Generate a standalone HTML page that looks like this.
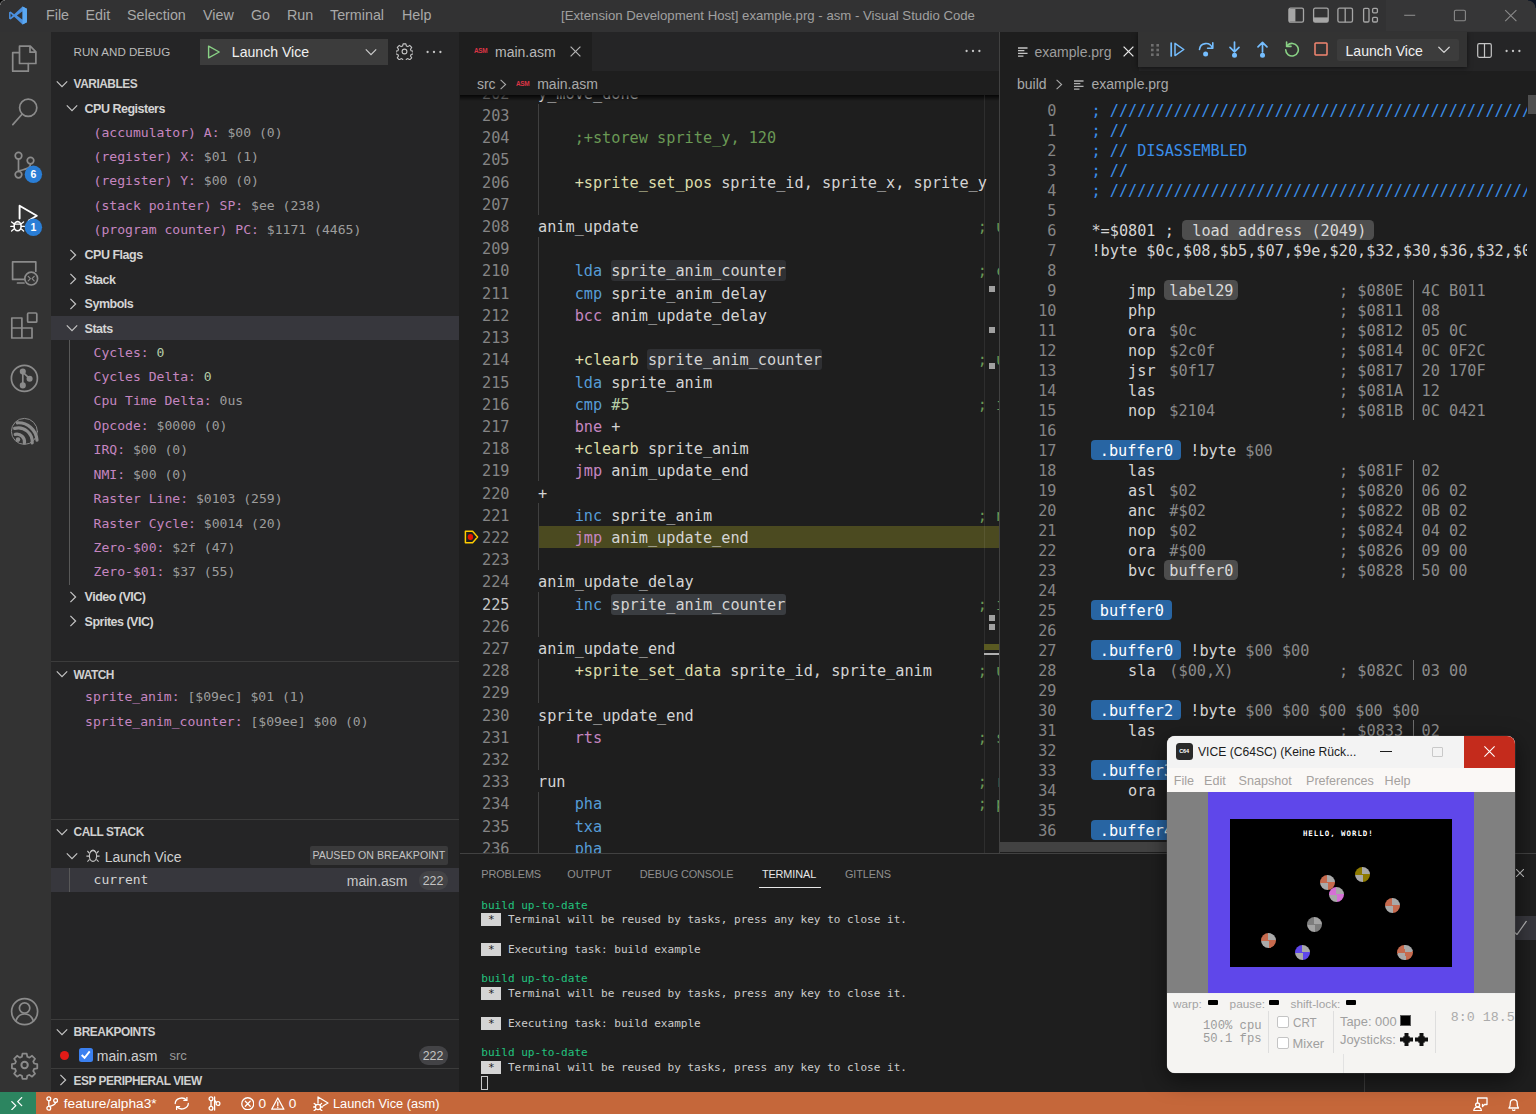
<!DOCTYPE html>
<html lang="en">
<head>
<meta charset="utf-8">
<title>[Extension Development Host] example.prg - asm - Visual Studio Code</title>
<style>
*{box-sizing:border-box;margin:0;padding:0}
html,body{width:1536px;height:1114px;overflow:hidden;background:#1e1e1e}
body{position:relative;font-family:"Liberation Sans","DejaVu Sans",sans-serif;font-size:14px;color:#cccccc;-webkit-font-smoothing:antialiased}
.abs{position:absolute}
.mono{font-family:"DejaVu Sans Mono","Liberation Mono",monospace}
svg{display:block}
/* ---------- title bar ---------- */
#titlebar{left:0;top:0;width:1536px;height:32px;background:#323233}
#titlebar .menu{position:absolute;top:0;height:32px;line-height:31px;font-size:14.3px;color:#a9a9a9;white-space:pre}
#titlebar .title{position:absolute;top:0;left:560px;width:416px;text-align:center;height:32px;line-height:31px;font-size:13.2px;color:#a0a0a0;white-space:pre}
/* ---------- activity bar ---------- */
#activity{left:0;top:32px;width:51px;height:1060px;background:#333333}
/* ---------- side bar ---------- */
#sidebar{left:51px;top:32px;width:408px;height:1060px;background:#252526;overflow:hidden}
/* sidebar items */
#sidebar>div{position:absolute;white-space:pre}
.sb-title{font-size:11.6px;color:#bbbbbb}
.sb-launch{font-size:14.1px;color:#f0f0f0}
.sb-hdr{padding-top:.6px;font-size:11.9px;font-weight:700;color:#d0d0d0;letter-spacing:-0.47px}
.sb-fold{font-size:12.5px;font-weight:700;color:#d4d4d4;letter-spacing:-0.5px}
.sb-var{font-size:13.08px;color:#9a9a9a}
.sb-var .vk{color:#c586c0}
.sb-var .vv{color:#9d9d9d}
.sb-var .vn{color:#b5cea8}
.sb-item{font-size:14px;color:#d0d0d0;padding-top:1.1px}
.sb-cur{font-size:13px;color:#d4d4d4}
.sb-paused{background:#3a3a3b;color:#c4c4c4;font-size:10.6px;text-align:center;border-radius:2px}
.sb-badge{background:#434346;color:#c4c4c4;padding-top:.6px;font-size:12.4px;text-align:center;border-radius:9px}
/* ---------- editors ---------- */
#ed1{left:460px;top:32px;width:540px;height:821px;background:#1e1e1e;overflow:hidden}
#ed2{left:1000px;top:32px;width:536px;height:821px;background:#1e1e1e;overflow:hidden}
#edsep{left:999px;top:32px;width:1px;height:821px;background:#414141}
.tabs{left:0;top:0;width:100%;height:38.5px;background:#252526}
.crumbs{left:0;top:38.5px;width:100%;height:24px;background:#1e1e1e}
/* editor common */
.asmico{font-size:8px;font-weight:700;color:#dc3545;letter-spacing:-0.4px;transform:scaleX(.8);transform-origin:0 50%;font-family:"Liberation Sans",sans-serif}
.tablabel{padding-top:.7px;font-size:14px;white-space:pre}
.crumb{padding-top:.7px;font-size:14px;color:#a9a9a9;white-space:pre}
.code{font-size:15.22px;color:#d4d4d4}
.code>div{position:absolute;white-space:pre}
#code1 .ln{margin-top:1.3px;left:0;width:49.5px;text-align:right;color:#858585;height:22.21px;line-height:22.21px}
#code1 .ln.cur{color:#c6c6c6}
#code1 .cl{height:22.21px;line-height:22.21px;margin-top:1.3px}
#code1 .guide{left:77.5px;width:1px;height:22.21px;background:#404040}
.k{color:#569cd6}.j{color:#c586c0}.m{color:#dcdcaa}.n{color:#b5cea8}.c{color:#6a9955}.w{color:#d4d4d4}
.hlb{background:#2f3033;border-radius:3px}
.hlb2{background:#3a3d41;border-radius:3px}
#code2 .ln{left:0;width:56.5px;text-align:right;color:#858585;height:20px;line-height:20px;margin-top:1px}
#code2 .cl{height:20px;line-height:20px;margin-top:1px}
#code2 .vbar{width:1px;height:20px;background:#6e6e6e}
.b{color:#3b8eea}.g{color:#8c8c8c}.o{color:#8a8a8a}.lt{color:#ffffff}.ih{color:#d8d8d8}
.ihint{background:#4d4d4d;border-radius:4.5px}
.lbl{background:#2865a3;border-radius:4px}
/* ---------- panel ---------- */
#panel{left:460px;top:853px;width:1076px;height:239px;background:#1e1e1e;border-top:1px solid #414141;overflow:hidden}
.ptab{height:20px;line-height:20px;font-size:10.9px;color:#8f8f8f;white-space:pre;text-align:left;letter-spacing:-0.1px}
.ptab.act{color:#e7e7e7}
.tl{margin-top:1.3px;font-size:11.05px;height:14.79px;line-height:14.79px;color:#cccccc;white-space:pre}
.st{top:0;height:22.5px;line-height:24.2px;font-size:13.7px;color:#fff;white-space:pre}
/* ---------- status bar ---------- */
#status{left:0;top:1091.5px;width:1536px;height:22.5px;background:#c5673a;color:#fff;font-size:13.6px;line-height:22px;white-space:pre}
#status .remote{left:0;top:0;width:36px;height:22.5px;background:#2c8560}
/* ---------- VICE ---------- */
#vice{left:1167px;top:736px;width:348px;height:337px;background:#f0f0f0;border-radius:8px;overflow:hidden;box-shadow:0 0 0 .5px #55555588,0 6px 22px rgba(0,0,0,.55)}
</style>
</head>
<body>
<div id="titlebar" class="abs"><svg class="abs" style="left:8px;top:6px" width="20" height="19" viewBox="0 0 100 100"><path d="M74 3 30 44 11 29 3 33v34l8 4 19-15 44 41 23-11V14zM74 28v44L44 50zM11 60V40l11 10z" fill="#4a8fde"/><path d="M74 3 97 14v72L74 97z" fill="#5aa8f2"/></svg>
<span class="menu" style="left:46px">File</span>
<span class="menu" style="left:85.5px">Edit</span>
<span class="menu" style="left:127px">Selection</span>
<span class="menu" style="left:203px">View</span>
<span class="menu" style="left:251px">Go</span>
<span class="menu" style="left:287px">Run</span>
<span class="menu" style="left:330px">Terminal</span>
<span class="menu" style="left:402px">Help</span>
<span class="title" id="wtitle">[Extension Development Host] example.prg - asm - Visual Studio Code</span>
<div class="abs" style="left:1386px;top:0;width:150px;height:31px;background:#363637"></div>
<svg class="abs" style="left:1288px;top:7px" width="92" height="17" viewBox="0 0 92 17" fill="none" stroke="#a6a6a6" stroke-width="1.3">
 <rect x="0.9" y="1.2" width="14.6" height="14" rx="1.6"/><path d="M1 2h6.4v12.6H1z" fill="#a6a6a6" stroke="none"/>
 <rect x="25.6" y="1.2" width="14.6" height="14" rx="1.6"/><path d="M26 10.4h14v4.6H26z" fill="#a6a6a6" stroke="none"/>
 <rect x="49.9" y="1.2" width="14.6" height="14" rx="1.6"/><path d="M57.2 1.2v14"/>
 <rect x="75.6" y="1.4" width="5.4" height="13.6" rx="1.2"/><rect x="84.6" y="1.4" width="4.8" height="4.4" rx="1.1"/><rect x="84.6" y="10.4" width="4.8" height="4.6" rx="1.1"/>
</svg>
<svg class="abs" style="left:1400px;top:5px" width="124" height="22" viewBox="0 0 124 22" fill="none" stroke="#8a8a8a" stroke-width="1.1">
 <path d="M4.2 10.3h11"/>
 <rect x="54.4" y="5.2" width="11" height="10.6" rx="1.4"/>
 <path d="M105.2 5.2l11.2 11M116.4 5.2l-11.2 11"/>
</svg>
<div class="abs" id="corner-tr" style="left:1528px;top:0;width:8px;height:8px;background:radial-gradient(circle at 0 100%,rgba(0,0,0,0) 7px,#0c1424 7.8px)"></div>
<div class="abs" id="corner-tl" style="left:0;top:0;width:5px;height:5px;background:radial-gradient(circle at 100% 100%,rgba(0,0,0,0) 4px,#777 4.6px,#050505 5.4px)"></div>
</div>
<div id="activity" class="abs"><svg class="abs" style="left:0;top:0" width="51" height="1060" viewBox="0 32 51 1060" fill="none" stroke="#8b8b8b" stroke-width="1.7" stroke-linejoin="round" stroke-linecap="round">
 <!-- explorer -->
 <path d="M19.5 63.5v-17.3h10.8l5.6 5.6v11.7z M30 46.4v5.8h5.8"/>
 <path d="M19.3 52.6h-6.6v18.6h15.6v-7.5"/>
 <!-- search -->
 <circle cx="28.2" cy="107.8" r="8.6"/><path d="M22 114.2 12.8 124.6"/>
 <!-- scm -->
 <circle cx="18.5" cy="155.7" r="3.3"/><circle cx="30.5" cy="160.6" r="3.3"/><circle cx="18.5" cy="174.6" r="3.3"/>
 <path d="M18.5 159v12.3M30.5 164c0 5-6 5.2-11.6 7"/>
 <!-- remote explorer -->
 <path d="M24.5 279.4H12.6v-17.6h23.2v9.4M17.5 283h6.5"/>
 <circle cx="31.2" cy="278.6" r="6.4" fill="#333"/>
 <path d="M28.2 276.4l2.2 2.2-2.2 2.2M34.2 276.4l-2.2 2.2 2.2 2.2" stroke-width="1.2"/>
 <!-- extensions -->
 <path d="M11.8 318h10.1v10H11.8zM21.9 328H32v10H21.9zM11.8 328h10.1v10H11.8z"/><rect x="27.6" y="313" width="9.2" height="9.2" rx="1"/>
 <!-- gitlens -->
 <circle cx="24.4" cy="378.4" r="13"/>
 <circle cx="22.8" cy="371.6" r="2.2" fill="#8b8b8b"/><circle cx="29.6" cy="378.8" r="2.2" fill="#8b8b8b"/><circle cx="22.8" cy="385.4" r="2.2" fill="#8b8b8b"/>
 <path d="M22.8 372v13M23 372.4l6.4 6"/>
 <!-- espressif -->
 <circle cx="24.4" cy="431.4" r="13" stroke-width="1"/>
 <g stroke-width="3.2"><path d="M14.6 428.4a14 14 0 0 1 17.6 14.6"/><path d="M17.4 422.8a18.6 18.6 0 0 1 19.6 17.4"/><path d="M15.2 434.4a7.6 7.6 0 0 1 9.2 8.6"/></g>
 <circle cx="18" cy="439.6" r="2.3" fill="#8b8b8b" stroke="none"/>
 <!-- account -->
 <circle cx="24.6" cy="1011.6" r="13"/><circle cx="24.6" cy="1008" r="5.2"/><path d="M15.8 1021c1.6-5 5-7 8.8-7s7.2 2 8.8 7"/>
 <!-- gear -->
 <g transform="translate(24.6 1065)"><circle r="3.2" stroke-width="2"/>
 <path stroke-width="2" d="M-2.4-13h4.8l.7 3.6 2.4 1 3-2.1 3.4 3.4-2.1 3 1 2.4 3.6.7v4.8l-3.6.7-1 2.4 2.1 3-3.4 3.4-3-2.1-2.4 1-.7 3.6h-4.8l-.7-3.6-2.4-1-3 2.1-3.4-3.4 2.1-3-1-2.4-3.6-.7v-4.8l3.6-.7 1-2.4-2.1-3 3.400-3.400 3 2.100 2.400-1z" transform="scale(.88)"/></g>
 <!-- debug (active) -->
 <g stroke="#ffffff"><path d="M19.6 218.600v-12.800l17.200 10-8 4.700" stroke-width="1.900"/>
 <ellipse cx="17.600" cy="226.200" rx="3.500" ry="4.600" stroke-width="1.600"/>
 <path d="M14.400 224.200h6.400M13.900 223.700l-2.300-1.700M21.300 223.700l2.300-1.700M13.700 226.400h-2.900M21.500 226.400h2.900M13.900 229.100l-2.300 1.900M21.300 229.100l2.300 1.900" stroke-width="1.300"/></g>
 <!-- badges -->
 <circle cx="33.400" cy="174.300" r="8.700" fill="#2a7ed6" stroke="none"/>
 <circle cx="33.400" cy="227.300" r="8.700" fill="#2a7ed6" stroke="none"/>
 <text x="33.400" y="178.200" font-family="Liberation Sans, sans-serif" font-size="10.500" font-weight="700" fill="#fff" stroke="none" text-anchor="middle">6</text>
 <text x="33.400" y="231.200" font-family="Liberation Sans, sans-serif" font-size="10.500" font-weight="700" fill="#fff" stroke="none" text-anchor="middle">1</text>
</svg>
</div>
<div id="sidebar" class="abs"><div class="sb-title" style="left:22.6px;top:7.50px;height:24px;line-height:24px;">RUN AND DEBUG</div>
<div class="abs" style="left:149px;top:6.5px;width:188px;height:26px;background:#3c3c3c"></div>
<svg class="abs" style="left:155.500px;top:13px" width="14" height="14" viewBox="0 0 14 14" fill="none" stroke="#89d185" stroke-width="1.4" stroke-linejoin="round"><path d="M1.6 1.2v11.6l10.6-5.8z"/></svg>
<div class="sb-launch" style="left:180.8px;top:7.60px;height:24px;line-height:24px;">Launch Vice</div>
<svg class="abs" style="left:314.2px;top:13.5px" width="12" height="12" viewBox="0 0 12 12" fill="none" stroke="#cccccc" stroke-width="1.2"><path d="M0.8 3.4 6 8.6l5.2-5.2"/></svg>
<svg class="abs" style="left:344.500px;top:10.500px" width="17" height="17" viewBox="-8.5 -8.5 17 17" fill="none" stroke="#c5c5c5" stroke-width="1.1" stroke-linejoin="round"><circle r="2.4"/><path d="M-1.4-7.600h2.800l.5 2.100 1.500.6 1.800-1.200 2 2-1.200 1.800.6 1.500 2.100.5v2.800l-2.100.5-.6 1.500 1.200 1.800-2 2-1.800-1.200-1.500.6-.5 2.100h-2.800l-.5-2.100-1.500-.6-1.800 1.200-2-2 1.200-1.800-.6-1.500-2.100-.5v-2.800l2.100-.5.6-1.500-1.200-1.800 2-2 1.800 1.200 1.500-.6z" transform="translate(0 6.2) translate(0 -6.200)"/></svg>
<svg class="abs" style="left:375px;top:17.500px" width="16" height="4" viewBox="0 0 16 4" fill="#c5c5c5"><circle cx="1.6" cy="2" r="1.15"/><circle cx="8" cy="2" r="1.15"/><circle cx="14.400" cy="2" r="1.15"/></svg>
<svg class="abs" style="left:5.4px;top:45.5px" width="12" height="12" viewBox="0 0 12 12" fill="none" stroke="#c5c5c5" stroke-width="1.2"><path d="M0.8 3.4 6 8.6l5.2-5.2"/></svg>
<div class="sb-hdr" style="left:22.6px;top:39.40px;height:24px;line-height:24px;">VARIABLES</div>
<div class="abs" style="left:0;top:283.84px;width:408px;height:24.44px;background:#37373d"></div>
<div class="abs" style="left:18.4px;top:308.28px;width:1px;height:244.40px;background:#585858"></div>
<svg class="abs" style="left:15.2px;top:70.1px" width="12" height="12" viewBox="0 0 12 12" fill="none" stroke="#c5c5c5" stroke-width="1.2"><path d="M0.8 3.4 6 8.6l5.2-5.2"/></svg><div class="sb-fold" style="left:33.6px;top:64.60px;height:24px;line-height:24px;">CPU Registers</div>
<div class="sb-var mono" style="left:42.6px;top:88.54px;height:24px;line-height:24px;"><span class="vk">(accumulator) A:</span> <span class="vv">$00 (0)</span></div>
<div class="sb-var mono" style="left:42.6px;top:112.98px;height:24px;line-height:24px;"><span class="vk">(register) X:</span> <span class="vv">$01 (1)</span></div>
<div class="sb-var mono" style="left:42.6px;top:137.42px;height:24px;line-height:24px;"><span class="vk">(register) Y:</span> <span class="vv">$00 (0)</span></div>
<div class="sb-var mono" style="left:42.6px;top:161.86px;height:24px;line-height:24px;"><span class="vk">(stack pointer) SP:</span> <span class="vv">$ee (238)</span></div>
<div class="sb-var mono" style="left:42.6px;top:186.30px;height:24px;line-height:24px;"><span class="vk">(program counter) PC:</span> <span class="vv">$1171 (4465)</span></div>
<svg class="abs" style="left:16.2px;top:216.7px" width="12" height="12" viewBox="0 0 12 12" fill="none" stroke="#c5c5c5" stroke-width="1.2"><path d="M3.4 0.8 8.6 6l-5.2 5.2"/></svg><div class="sb-fold" style="left:33.6px;top:211.24px;height:24px;line-height:24px;">CPU Flags</div>
<svg class="abs" style="left:16.2px;top:241.2px" width="12" height="12" viewBox="0 0 12 12" fill="none" stroke="#c5c5c5" stroke-width="1.2"><path d="M3.4 0.8 8.6 6l-5.2 5.2"/></svg><div class="sb-fold" style="left:33.6px;top:235.68px;height:24px;line-height:24px;">Stack</div>
<svg class="abs" style="left:16.2px;top:265.6px" width="12" height="12" viewBox="0 0 12 12" fill="none" stroke="#c5c5c5" stroke-width="1.2"><path d="M3.4 0.8 8.6 6l-5.2 5.2"/></svg><div class="sb-fold" style="left:33.6px;top:260.12px;height:24px;line-height:24px;">Symbols</div>
<svg class="abs" style="left:15.2px;top:290.1px" width="12" height="12" viewBox="0 0 12 12" fill="none" stroke="#c5c5c5" stroke-width="1.2"><path d="M0.8 3.4 6 8.6l5.2-5.2"/></svg><div class="sb-fold" style="left:33.6px;top:284.56px;height:24px;line-height:24px;">Stats</div>
<div class="sb-var mono" style="left:42.6px;top:308.50px;height:24px;line-height:24px;"><span class="vk">Cycles:</span> <span class="vn">0</span></div>
<div class="sb-var mono" style="left:42.6px;top:332.94px;height:24px;line-height:24px;"><span class="vk">Cycles Delta:</span> <span class="vn">0</span></div>
<div class="sb-var mono" style="left:42.6px;top:357.38px;height:24px;line-height:24px;"><span class="vk">Cpu Time Delta:</span> <span class="vv">0us</span></div>
<div class="sb-var mono" style="left:42.6px;top:381.82px;height:24px;line-height:24px;"><span class="vk">Opcode:</span> <span class="vv">$0000 (0)</span></div>
<div class="sb-var mono" style="left:42.6px;top:406.26px;height:24px;line-height:24px;"><span class="vk">IRQ:</span> <span class="vv">$00 (0)</span></div>
<div class="sb-var mono" style="left:42.6px;top:430.70px;height:24px;line-height:24px;"><span class="vk">NMI:</span> <span class="vv">$00 (0)</span></div>
<div class="sb-var mono" style="left:42.6px;top:455.14px;height:24px;line-height:24px;"><span class="vk">Raster Line:</span> <span class="vv">$0103 (259)</span></div>
<div class="sb-var mono" style="left:42.6px;top:479.58px;height:24px;line-height:24px;"><span class="vk">Raster Cycle:</span> <span class="vv">$0014 (20)</span></div>
<div class="sb-var mono" style="left:42.6px;top:504.02px;height:24px;line-height:24px;"><span class="vk">Zero-$00:</span> <span class="vv">$2f (47)</span></div>
<div class="sb-var mono" style="left:42.6px;top:528.46px;height:24px;line-height:24px;"><span class="vk">Zero-$01:</span> <span class="vv">$37 (55)</span></div>
<svg class="abs" style="left:16.2px;top:558.9px" width="12" height="12" viewBox="0 0 12 12" fill="none" stroke="#c5c5c5" stroke-width="1.2"><path d="M3.4 0.8 8.6 6l-5.2 5.2"/></svg><div class="sb-fold" style="left:33.6px;top:553.40px;height:24px;line-height:24px;">Video (VIC)</div>
<svg class="abs" style="left:16.2px;top:583.3px" width="12" height="12" viewBox="0 0 12 12" fill="none" stroke="#c5c5c5" stroke-width="1.2"><path d="M3.4 0.8 8.6 6l-5.2 5.2"/></svg><div class="sb-fold" style="left:33.6px;top:577.84px;height:24px;line-height:24px;">Sprites (VIC)</div>
<div class="abs" style="left:0;top:629.0px;width:408px;height:1px;background:#3c3c3c"></div>
<svg class="abs" style="left:5.4px;top:636.0px" width="12" height="12" viewBox="0 0 12 12" fill="none" stroke="#c5c5c5" stroke-width="1.2"><path d="M0.8 3.4 6 8.6l5.2-5.2"/></svg>
<div class="sb-hdr" style="left:22.6px;top:630.00px;height:24px;line-height:24px;">WATCH</div>
<div class="sb-var mono" style="left:34.1px;top:653.40px;height:24px;line-height:24px;"><span class="vk">sprite_anim:</span> <span class="vv">[$09ec] $01 (1)</span></div>
<div class="sb-var mono" style="left:34.1px;top:677.80px;height:24px;line-height:24px;"><span class="vk">sprite_anim_counter:</span> <span class="vv">[$09ee] $00 (0)</span></div>
<div class="abs" style="left:0;top:786.7px;width:408px;height:1px;background:#3c3c3c"></div>
<svg class="abs" style="left:5.4px;top:793.5px" width="12" height="12" viewBox="0 0 12 12" fill="none" stroke="#c5c5c5" stroke-width="1.2"><path d="M0.8 3.4 6 8.6l5.2-5.2"/></svg>
<div class="sb-hdr" style="left:22.6px;top:787.50px;height:24px;line-height:24px;">CALL STACK</div>
<svg class="abs" style="left:15.2px;top:817.7px" width="12" height="12" viewBox="0 0 12 12" fill="none" stroke="#c5c5c5" stroke-width="1.2"><path d="M0.8 3.4 6 8.6l5.2-5.2"/></svg>
<svg class="abs" style="left:34px;top:814.5px" width="16" height="18" viewBox="0 1 16 16" preserveAspectRatio="none" fill="none" stroke="#c5c5c5" stroke-width="1.1"><ellipse cx="8" cy="9" rx="3.600" ry="4.800"/><path d="M5.400 5.800a2.700 2.700 0 0 1 5.200 0M4.400 6.600 2.400 4.600M11.600 6.600l2-2M4.400 9.200H1.400M11.600 9.200h3M4.600 12l-2.200 2M11.400 12l2.200 2"/></svg>
<div class="sb-item" style="left:53.7px;top:811.60px;height:24px;line-height:24px;">Launch Vice</div>
<div class="abs sb-paused" style="left:258.8px;top:814px;width:138px;height:18.700px;line-height:18.700px">PAUSED ON BREAKPOINT</div>
<div class="abs" style="left:0;top:835.7px;width:408px;height:24.400px;background:#37373d"></div>
<div class="abs" style="left:18.4px;top:835.7px;width:1px;height:24.400px;background:#585858"></div>
<div class="sb-cur mono" style="left:42.6px;top:835.70px;height:24px;line-height:24px;">current</div>
<div class="sb-item" style="left:295.8px;top:835.80px;height:24px;line-height:24px;color:#c8c8c8">main.asm</div>
<div class="abs sb-badge" style="left:367.5px;top:839.3px;width:29px;height:19px;line-height:19px">222</div>
<div class="abs" style="left:0;top:987.0px;width:408px;height:1px;background:#3c3c3c"></div>
<svg class="abs" style="left:5.4px;top:993.7px" width="12" height="12" viewBox="0 0 12 12" fill="none" stroke="#c5c5c5" stroke-width="1.2"><path d="M0.8 3.4 6 8.6l5.2-5.2"/></svg>
<div class="sb-hdr" style="left:22.6px;top:987.70px;height:24px;line-height:24px;">BREAKPOINTS</div>
<div class="abs" style="left:8.6px;top:1018.5px;width:9.400px;height:9.400px;border-radius:50%;background:#e11b17"></div>
<div class="abs" style="left:28.4px;top:1016.2px;width:13.400px;height:13.400px;border-radius:2.500px;background:#3b80f0"><svg width="13.400" height="13.400" viewBox="0 0 14 14" fill="none" stroke="#fff" stroke-width="2"><path d="M2.800 7.300 5.800 10.200 11.200 3.600"/></svg></div>
<div class="sb-item" style="left:45.8px;top:1011.20px;height:24px;line-height:24px;">main.asm</div>
<div class="sb-item" style="left:118.4px;top:1011.40px;height:24px;line-height:24px;color:#9a9a9a;font-size:13px">src</div>
<div class="abs sb-badge" style="left:367.5px;top:1014px;width:29px;height:19px;line-height:19px">222</div>
<div class="abs" style="left:0;top:1036.0px;width:408px;height:1px;background:#3c3c3c"></div>
<svg class="abs" style="left:5.6px;top:1042.0px" width="12" height="12" viewBox="0 0 12 12" fill="none" stroke="#c5c5c5" stroke-width="1.2"><path d="M3.4 0.8 8.6 6l-5.2 5.2"/></svg>
<div class="sb-hdr" style="left:22.6px;top:1036.00px;height:24px;line-height:24px;">ESP PERIPHERAL VIEW</div></div>
<div id="ed1" class="abs"><div class="tabs abs"></div>
<div class="abs" style="left:0;top:0;width:132px;height:38.500px;background:#1e1e1e"></div>
<div class="abs asmico" style="left:13.6px;top:0;height:38px;line-height:38px">ASM</div>
<div class="abs tablabel" style="left:35px;top:0;height:38px;line-height:38.500px;color:#b8b8b8">main.asm</div>
<svg class="abs" style="left:110px;top:14px" width="11" height="11" viewBox="0 0 11 11" stroke="#b4b4b4" stroke-width="1.2"><path d="M.6.6l9.800 9.800M10.400.6.6 10.400"/></svg>
<svg class="abs" style="left:505px;top:17px" width="16" height="4" viewBox="0 0 16 4" fill="#c5c5c5"><circle cx="1.6" cy="2" r="1.15"/><circle cx="8" cy="2" r="1.15"/><circle cx="14.400" cy="2" r="1.15"/></svg>
<div class="crumbs abs"></div>
<div class="abs crumb" style="left:16.900px;top:38px;height:23px;line-height:27px">src</div>
<svg class="abs" style="left:39px;top:47px" width="9" height="11" viewBox="0 0 9 11" fill="none" stroke="#a9a9a9" stroke-width="1.1"><path d="M1.600.8 6.600 5.500l-5 4.700"/></svg>
<div class="abs asmico" style="left:56px;top:38px;height:23px;line-height:27px;">ASM</div>
<div class="abs crumb" style="left:77.200px;top:38px;height:23px;line-height:27px">main.asm</div>
<div class="abs code mono" id="code1" style="left:0;top:62.500px;width:540px;height:758.500px;overflow:hidden">
<div class="abs" style="left:77.500px;top:431.18px;width:462.500px;height:22.21px;background:#4b4a20"></div>
<div class="ln" style="top:-13.02px">202</div>
<div class="cl w" style="left:78.00px;top:-13.02px">y_move_done</div>
<div class="ln" style="top:9.19px">203</div>
<div class="guide" style="top:9.19px"></div>
<div class="ln" style="top:31.40px">204</div>
<div class="guide" style="top:31.40px"></div>
<div class="cl c" style="left:114.64px;top:31.40px">;+storew sprite_y, 120</div>
<div class="ln" style="top:53.62px">205</div>
<div class="guide" style="top:53.62px"></div>
<div class="ln" style="top:75.83px">206</div>
<div class="guide" style="top:75.83px"></div>
<div class="cl m" style="left:114.64px;top:75.83px">+sprite_set_pos</div>
<div class="cl w" style="left:252.04px;top:75.83px"> sprite_id, sprite_x, sprite_y</div>
<div class="ln" style="top:98.03px">207</div>
<div class="guide" style="top:98.03px"></div>
<div class="ln" style="top:120.25px">208</div>
<div class="cl w" style="left:78.00px;top:120.25px">anim_update</div>
<div class="cl c" style="left:517.68px;top:120.25px">; u</div>
<div class="ln" style="top:142.46px">209</div>
<div class="guide" style="top:142.46px"></div>
<div class="ln" style="top:164.66px">210</div>
<div class="guide" style="top:164.66px"></div>
<div class="cl k" style="left:114.64px;top:164.66px">lda</div>
<div class="hlb" style="left:150.78px;top:165.86px;width:175.04px;height:21.01px"></div>
<div class="cl w" style="left:151.28px;top:164.66px">sprite_anim_counter</div>
<div class="cl c" style="left:517.68px;top:164.66px">; c</div>
<div class="ln" style="top:186.88px">211</div>
<div class="guide" style="top:186.88px"></div>
<div class="cl k" style="left:114.64px;top:186.88px">cmp</div>
<div class="cl w" style="left:151.28px;top:186.88px">sprite_anim_delay</div>
<div class="ln" style="top:209.08px">212</div>
<div class="guide" style="top:209.08px"></div>
<div class="cl j" style="left:114.64px;top:209.08px">bcc</div>
<div class="cl w" style="left:151.28px;top:209.08px">anim_update_delay</div>
<div class="ln" style="top:231.30px">213</div>
<div class="guide" style="top:231.30px"></div>
<div class="ln" style="top:253.50px">214</div>
<div class="guide" style="top:253.50px"></div>
<div class="cl m" style="left:114.64px;top:253.50px">+clearb</div>
<div class="hlb" style="left:187.42px;top:254.70px;width:175.04px;height:21.01px"></div>
<div class="cl w" style="left:187.92px;top:253.50px">sprite_anim_counter</div>
<div class="cl c" style="left:517.68px;top:253.50px">; u</div>
<div class="ln" style="top:275.71px">215</div>
<div class="guide" style="top:275.71px"></div>
<div class="cl k" style="left:114.64px;top:275.71px">lda</div>
<div class="cl w" style="left:151.28px;top:275.71px">sprite_anim</div>
<div class="ln" style="top:297.93px">216</div>
<div class="guide" style="top:297.93px"></div>
<div class="cl k" style="left:114.64px;top:297.93px">cmp</div>
<div class="cl n" style="left:151.28px;top:297.93px">#5</div>
<div class="cl c" style="left:517.68px;top:297.93px">; i</div>
<div class="ln" style="top:320.13px">217</div>
<div class="guide" style="top:320.13px"></div>
<div class="cl j" style="left:114.64px;top:320.13px">bne</div>
<div class="cl w" style="left:151.28px;top:320.13px">+</div>
<div class="ln" style="top:342.35px">218</div>
<div class="guide" style="top:342.35px"></div>
<div class="cl m" style="left:114.64px;top:342.35px">+clearb</div>
<div class="cl w" style="left:187.92px;top:342.35px">sprite_anim</div>
<div class="ln" style="top:364.56px">219</div>
<div class="guide" style="top:364.56px"></div>
<div class="cl j" style="left:114.64px;top:364.56px">jmp</div>
<div class="cl w" style="left:151.28px;top:364.56px">anim_update_end</div>
<div class="ln" style="top:386.76px">220</div>
<div class="cl w" style="left:78.00px;top:386.76px">+</div>
<div class="ln" style="top:408.98px">221</div>
<div class="guide" style="top:408.98px"></div>
<div class="cl k" style="left:114.64px;top:408.98px">inc</div>
<div class="cl w" style="left:151.28px;top:408.98px">sprite_anim</div>
<div class="cl c" style="left:517.68px;top:408.98px">; n</div>
<div class="ln" style="top:431.18px">222</div>
<div class="guide" style="top:431.18px"></div>
<div class="cl j" style="left:114.64px;top:431.18px">jmp</div>
<div class="cl w" style="left:151.28px;top:431.18px">anim_update_end</div>
<div class="ln" style="top:453.39px">223</div>
<div class="guide" style="top:453.39px"></div>
<div class="ln" style="top:475.61px">224</div>
<div class="cl w" style="left:78.00px;top:475.61px">anim_update_delay</div>
<div class="ln cur" style="top:497.81px">225</div>
<div class="guide" style="top:497.81px"></div>
<div class="cl k" style="left:114.64px;top:497.81px">inc</div>
<div class="hlb2" style="left:150.78px;top:499.01px;width:175.04px;height:21.01px"></div>
<div class="cl w" style="left:151.28px;top:497.81px">sprite_anim_counter</div>
<div class="cl c" style="left:517.68px;top:497.81px">; i</div>
<div class="ln" style="top:520.02px">226</div>
<div class="guide" style="top:520.02px"></div>
<div class="ln" style="top:542.23px">227</div>
<div class="cl w" style="left:78.00px;top:542.23px">anim_update_end</div>
<div class="ln" style="top:564.44px">228</div>
<div class="guide" style="top:564.44px"></div>
<div class="cl m" style="left:114.64px;top:564.44px">+sprite_set_data</div>
<div class="cl w" style="left:261.20px;top:564.44px"> sprite_id, sprite_anim</div>
<div class="cl c" style="left:517.68px;top:564.44px">; u</div>
<div class="ln" style="top:586.65px">229</div>
<div class="guide" style="top:586.65px"></div>
<div class="ln" style="top:608.87px">230</div>
<div class="cl w" style="left:78.00px;top:608.87px">sprite_update_end</div>
<div class="ln" style="top:631.07px">231</div>
<div class="guide" style="top:631.07px"></div>
<div class="cl j" style="left:114.64px;top:631.07px">rts</div>
<div class="cl c" style="left:517.68px;top:631.07px">; s</div>
<div class="ln" style="top:653.28px">232</div>
<div class="guide" style="top:653.28px"></div>
<div class="ln" style="top:675.50px">233</div>
<div class="cl w" style="left:78.00px;top:675.50px">run</div>
<div class="cl c" style="left:517.68px;top:675.50px">; r</div>
<div class="ln" style="top:697.70px">234</div>
<div class="guide" style="top:697.70px"></div>
<div class="cl k" style="left:114.64px;top:697.70px">pha</div>
<div class="cl c" style="left:517.68px;top:697.70px">; p</div>
<div class="ln" style="top:719.91px">235</div>
<div class="guide" style="top:719.91px"></div>
<div class="cl k" style="left:114.64px;top:719.91px">txa</div>
<div class="ln" style="top:742.12px">236</div>
<div class="guide" style="top:742.12px"></div>
<div class="cl k" style="left:114.64px;top:742.12px">pha</div>
<div class="ln" style="top:764.33px">237</div>
<div class="guide" style="top:764.33px"></div>
<div class="cl k" style="left:114.64px;top:764.33px">tya</div>
<svg class="abs" style="left:3.700px;top:435.49px" width="15" height="14" viewBox="0 0 15 13" preserveAspectRatio="none" fill="none"><path d="M1.400 1.200h7.200l5 5.300-5 5.300H1.400z" stroke="#ffcc00" stroke-width="1.500" stroke-linejoin="round"/><circle cx="6.400" cy="6.500" r="2.700" fill="#e51400"/></svg>
</div>
<div class="abs" style="left:0;top:62.500px;width:540px;height:6px;background:linear-gradient(#000000cc,#00000000)"></div>
<div class="abs" style="left:523.500px;top:62.500px;width:1px;height:758.500px;background:rgba(255,255,255,.075)"></div>
<div class="abs" style="left:528.600px;top:254.2px;width:6px;height:6px;background:#a0a0a0"></div>
<div class="abs" style="left:528.600px;top:294.5px;width:6px;height:6px;background:#a0a0a0"></div>
<div class="abs" style="left:528.600px;top:331.0px;width:6px;height:6px;background:#a0a0a0"></div>
<div class="abs" style="left:528.600px;top:582.6px;width:6px;height:6px;background:#a0a0a0"></div>
<div class="abs" style="left:528.600px;top:592.0px;width:6px;height:6px;background:#a0a0a0"></div>
<div class="abs" style="left:524px;top:612px;width:16px;height:5.600px;background:#5a5a22"></div>
<div class="abs" style="left:524px;top:620.7px;width:16px;height:2.300px;background:#b0b0b0"></div></div>
<div id="ed2" class="abs"><div class="tabs abs"></div>
<div class="abs" style="left:0;top:0;width:139px;height:38.500px;background:#1e1e1e"></div>
<svg class="abs" style="left:17.5px;top:14.5px" width="10" height="10" viewBox="0 0 11 10" preserveAspectRatio="none" stroke="#c5c5c5" stroke-width="1.3" fill="none"><path d="M0 1h10.500M0 3.700h7M0 6.400h10.500M0 9.100h6"/></svg>
<div class="abs tablabel" style="left:34.5px;top:0;height:38px;line-height:38.500px;color:#9d9d9d">example.prg</div>
<svg class="abs" style="left:123px;top:14px" width="11" height="11" viewBox="0 0 11 11" stroke="#e8e8e8" stroke-width="1.300"><path d="M.6.6l9.800 9.800M10.400.6.6 10.400"/></svg>
<svg class="abs" style="left:476.5px;top:11px" width="15" height="15" viewBox="0 0 15 15" fill="none" stroke="#c5c5c5" stroke-width="1.200"><rect x=".7" y=".7" width="13.600" height="13.600" rx="1.500"/><path d="M7.500.7v13.600"/></svg>
<svg class="abs" style="left:505px;top:17px" width="16" height="4" viewBox="0 0 16 4" fill="#c5c5c5"><circle cx="1.6" cy="2" r="1.15"/><circle cx="8" cy="2" r="1.15"/><circle cx="14.400" cy="2" r="1.15"/></svg>
<div class="crumbs abs"></div>
<div class="abs crumb" style="left:17px;top:38px;height:23px;line-height:27px">build</div>
<svg class="abs" style="left:54.5px;top:47px" width="9" height="11" viewBox="0 0 9 11" fill="none" stroke="#a9a9a9" stroke-width="1.100"><path d="M1.600.8 6.600 5.500l-5 4.700"/></svg>
<svg class="abs" style="left:74.0px;top:47.5px" width="10" height="10" viewBox="0 0 11 10" preserveAspectRatio="none" stroke="#b0b0b0" stroke-width="1.3" fill="none"><path d="M0 1h10.500M0 3.700h7M0 6.400h10.500M0 9.100h6"/></svg>
<div class="abs crumb" style="left:91.5px;top:38px;height:23px;line-height:27px">example.prg</div>
<div class="abs code mono" id="code2" style="left:0;top:62.500px;width:527px;height:747.500px;overflow:hidden">
<div class="ln" style="top:5.90px">0</div>
<div class="ln" style="top:25.90px">1</div>
<div class="ln" style="top:45.90px">2</div>
<div class="ln" style="top:65.90px">3</div>
<div class="ln" style="top:85.90px">4</div>
<div class="ln" style="top:105.90px">5</div>
<div class="ln" style="top:125.90px">6</div>
<div class="ln" style="top:145.90px">7</div>
<div class="ln" style="top:165.90px">8</div>
<div class="ln" style="top:185.90px">9</div>
<div class="ln" style="top:205.90px">10</div>
<div class="ln" style="top:225.90px">11</div>
<div class="ln" style="top:245.90px">12</div>
<div class="ln" style="top:265.90px">13</div>
<div class="ln" style="top:285.90px">14</div>
<div class="ln" style="top:305.90px">15</div>
<div class="ln" style="top:325.90px">16</div>
<div class="ln" style="top:345.90px">17</div>
<div class="ln" style="top:365.90px">18</div>
<div class="ln" style="top:385.90px">19</div>
<div class="ln" style="top:405.90px">20</div>
<div class="ln" style="top:425.90px">21</div>
<div class="ln" style="top:445.90px">22</div>
<div class="ln" style="top:465.90px">23</div>
<div class="ln" style="top:485.90px">24</div>
<div class="ln" style="top:505.90px">25</div>
<div class="ln" style="top:525.90px">26</div>
<div class="ln" style="top:545.90px">27</div>
<div class="ln" style="top:565.90px">28</div>
<div class="ln" style="top:585.90px">29</div>
<div class="ln" style="top:605.90px">30</div>
<div class="ln" style="top:625.90px">31</div>
<div class="ln" style="top:645.90px">32</div>
<div class="ln" style="top:665.90px">33</div>
<div class="ln" style="top:685.90px">34</div>
<div class="ln" style="top:705.90px">35</div>
<div class="ln" style="top:725.90px">36</div>
<div class="ln" style="top:745.90px">37</div>
<div class="cl b" style="left:91.40px;top:5.90px">; ////////////////////////////////////////////////////////////</div>
<div class="cl b" style="left:91.40px;top:25.90px">; //</div>
<div class="cl b" style="left:91.40px;top:45.90px">; // DISASSEMBLED</div>
<div class="cl b" style="left:91.40px;top:65.90px">; //</div>
<div class="cl b" style="left:91.40px;top:85.90px">; ////////////////////////////////////////////////////////////</div>
<div class="cl w" style="left:91.40px;top:125.90px">*=$0801 ; </div>
<div class="ihint" style="left:182.18px;top:125.70px;width:191.65px;height:19.6px"></div>
<div class="cl ih" style="left:192.27px;top:125.90px">load address (2049)</div>
<div class="cl w" style="left:91.40px;top:145.90px">!byte $0c,$08,$b5,$07,$9e,$20,$32,$30,$36,$32,$01,$00,$00</div>
<div class="cl w" style="left:128.08px;top:185.90px">jmp</div>
<div class="ihint" style="left:164.03px;top:185.70px;width:74.28px;height:19.6px"></div>
<div class="cl ih" style="left:169.35px;top:185.90px">label29</div>
<div class="cl g" style="left:338.99px;top:185.90px">; $080E</div>
<div class="vbar" style="left:413.0px;top:185.90px"></div>
<div class="cl g" style="left:421.52px;top:185.90px">4C B011</div>
<div class="cl w" style="left:128.08px;top:205.90px">php</div>
<div class="cl g" style="left:338.99px;top:205.90px">; $0811</div>
<div class="vbar" style="left:413.0px;top:205.90px"></div>
<div class="cl g" style="left:421.52px;top:205.90px">08</div>
<div class="cl w" style="left:128.08px;top:225.90px">ora</div>
<div class="cl o" style="left:169.35px;top:225.90px">$0c</div>
<div class="cl g" style="left:338.99px;top:225.90px">; $0812</div>
<div class="vbar" style="left:413.0px;top:225.90px"></div>
<div class="cl g" style="left:421.52px;top:225.90px">05 0C</div>
<div class="cl w" style="left:128.08px;top:245.90px">nop</div>
<div class="cl o" style="left:169.35px;top:245.90px">$2c0f</div>
<div class="cl g" style="left:338.99px;top:245.90px">; $0814</div>
<div class="vbar" style="left:413.0px;top:245.90px"></div>
<div class="cl g" style="left:421.52px;top:245.90px">0C 0F2C</div>
<div class="cl w" style="left:128.08px;top:265.90px">jsr</div>
<div class="cl o" style="left:169.35px;top:265.90px">$0f17</div>
<div class="cl g" style="left:338.99px;top:265.90px">; $0817</div>
<div class="vbar" style="left:413.0px;top:265.90px"></div>
<div class="cl g" style="left:421.52px;top:265.90px">20 170F</div>
<div class="cl w" style="left:128.08px;top:285.90px">las</div>
<div class="cl g" style="left:338.99px;top:285.90px">; $081A</div>
<div class="vbar" style="left:413.0px;top:285.90px"></div>
<div class="cl g" style="left:421.52px;top:285.90px">12</div>
<div class="cl w" style="left:128.08px;top:305.90px">nop</div>
<div class="cl o" style="left:169.35px;top:305.90px">$2104</div>
<div class="cl g" style="left:338.99px;top:305.90px">; $081B</div>
<div class="vbar" style="left:413.0px;top:305.90px"></div>
<div class="cl g" style="left:421.52px;top:305.90px">0C 0421</div>
<div class="lbl" style="left:91.03px;top:345.50px;width:90.23px;height:20px"></div>
<div class="cl lt" style="left:99.77px;top:345.90px">.buffer0</div>
<div class="cl w" style="left:190.27px;top:345.90px">!byte</div>
<div class="cl o" style="left:245.29px;top:345.90px">$00</div>
<div class="cl w" style="left:128.08px;top:365.90px">las</div>
<div class="cl g" style="left:338.99px;top:365.90px">; $081F</div>
<div class="vbar" style="left:413.0px;top:365.90px"></div>
<div class="cl g" style="left:421.52px;top:365.90px">02</div>
<div class="cl w" style="left:128.08px;top:385.90px">asl</div>
<div class="cl o" style="left:169.35px;top:385.90px">$02</div>
<div class="cl g" style="left:338.99px;top:385.90px">; $0820</div>
<div class="vbar" style="left:413.0px;top:385.90px"></div>
<div class="cl g" style="left:421.52px;top:385.90px">06 02</div>
<div class="cl w" style="left:128.08px;top:405.90px">anc</div>
<div class="cl o" style="left:169.35px;top:405.90px">#$02</div>
<div class="cl g" style="left:338.99px;top:405.90px">; $0822</div>
<div class="vbar" style="left:413.0px;top:405.90px"></div>
<div class="cl g" style="left:421.52px;top:405.90px">0B 02</div>
<div class="cl w" style="left:128.08px;top:425.90px">nop</div>
<div class="cl o" style="left:169.35px;top:425.90px">$02</div>
<div class="cl g" style="left:338.99px;top:425.90px">; $0824</div>
<div class="vbar" style="left:413.0px;top:425.90px"></div>
<div class="cl g" style="left:421.52px;top:425.90px">04 02</div>
<div class="cl w" style="left:128.08px;top:445.90px">ora</div>
<div class="cl o" style="left:169.35px;top:445.90px">#$00</div>
<div class="cl g" style="left:338.99px;top:445.90px">; $0826</div>
<div class="vbar" style="left:413.0px;top:445.90px"></div>
<div class="cl g" style="left:421.52px;top:445.90px">09 00</div>
<div class="cl w" style="left:128.08px;top:465.90px">bvc</div>
<div class="ihint" style="left:164.03px;top:465.70px;width:74.28px;height:19.6px"></div>
<div class="cl ih" style="left:169.35px;top:465.90px">buffer0</div>
<div class="cl g" style="left:338.99px;top:465.90px">; $0828</div>
<div class="vbar" style="left:413.0px;top:465.90px"></div>
<div class="cl g" style="left:421.52px;top:465.90px">50 00</div>
<div class="lbl" style="left:91.03px;top:505.50px;width:80.60px;height:20px"></div>
<div class="cl lt" style="left:99.77px;top:505.90px">buffer0</div>
<div class="lbl" style="left:91.03px;top:545.50px;width:90.23px;height:20px"></div>
<div class="cl lt" style="left:99.77px;top:545.90px">.buffer0</div>
<div class="cl w" style="left:190.27px;top:545.90px">!byte</div>
<div class="cl o" style="left:245.29px;top:545.90px">$00 $00</div>
<div class="cl w" style="left:128.08px;top:565.90px">sla</div>
<div class="cl o" style="left:169.35px;top:565.90px">($00,X)</div>
<div class="cl g" style="left:338.99px;top:565.90px">; $082C</div>
<div class="vbar" style="left:413.0px;top:565.90px"></div>
<div class="cl g" style="left:421.52px;top:565.90px">03 00</div>
<div class="lbl" style="left:91.03px;top:605.50px;width:90.23px;height:20px"></div>
<div class="cl lt" style="left:99.77px;top:605.90px">.buffer2</div>
<div class="cl w" style="left:190.27px;top:605.90px">!byte</div>
<div class="cl o" style="left:245.29px;top:605.90px">$00 $00 $00 $00 $00</div>
<div class="cl w" style="left:128.08px;top:625.90px">las</div>
<div class="cl g" style="left:338.99px;top:625.90px">; $0833</div>
<div class="vbar" style="left:413.0px;top:625.90px"></div>
<div class="cl g" style="left:421.52px;top:625.90px">02</div>
<div class="lbl" style="left:91.03px;top:665.50px;width:90.23px;height:20px"></div>
<div class="cl lt" style="left:99.77px;top:665.90px">.buffer3</div>
<div class="cl w" style="left:190.27px;top:665.90px">!byte</div>
<div class="cl o" style="left:245.29px;top:665.90px">$00</div>
<div class="cl w" style="left:128.08px;top:685.90px">ora</div>
<div class="cl o" style="left:169.35px;top:685.90px">$02</div>
<div class="cl g" style="left:338.99px;top:685.90px">; $0836</div>
<div class="vbar" style="left:413.0px;top:685.90px"></div>
<div class="cl g" style="left:421.52px;top:685.90px">05 02</div>
<div class="lbl" style="left:91.03px;top:725.50px;width:90.23px;height:20px"></div>
<div class="cl lt" style="left:99.77px;top:725.90px">.buffer4</div>
<div class="cl w" style="left:190.27px;top:725.90px">!byte</div>
<div class="cl o" style="left:245.29px;top:725.90px">$00</div>
<div class="cl w" style="left:128.08px;top:745.90px">las</div>
<div class="cl g" style="left:338.99px;top:745.90px">; $083A</div>
<div class="vbar" style="left:413.0px;top:745.90px"></div>
<div class="cl g" style="left:421.52px;top:745.90px">02</div>
</div>
<div class="abs" style="left:0;top:810.2px;width:400px;height:10.200px;background:#424242"></div>
<div class="abs" style="left:528px;top:63px;width:8px;height:19px;background:#4f4f4f"></div>
<div class="abs" style="left:138.0px;top:0;width:329px;height:34.500px;background:#333333;box-shadow:0 1px 5px rgba(0,0,0,.55)"></div>
<svg class="abs" style="left:150.5px;top:11.5px" width="9" height="13" viewBox="0 0 9 13" fill="none" stroke-linecap="round" stroke-linejoin="round"><g fill="#6f6f6f"><rect x="0" y="0" width="2.600" height="2.600"/><rect x="5.400" y="0" width="2.600" height="2.600"/><rect x="0" y="4.700" width="2.600" height="2.600"/><rect x="5.400" y="4.700" width="2.600" height="2.600"/><rect x="0" y="9.400" width="2.600" height="2.600"/><rect x="5.400" y="9.400" width="2.600" height="2.600"/></g></svg>
<svg class="abs" style="left:169.5px;top:10.0px" width="15" height="15" viewBox="0 0 15 15" fill="none" stroke-linecap="round" stroke-linejoin="round"><path d="M1.200 1v13" stroke="#75beff" stroke-width="1.700"/><path d="M5 1.400v12.200l8.800-6.100z" stroke="#75beff" stroke-width="1.500"/></svg>
<svg class="abs" style="left:197.5px;top:9.3px" width="17" height="16" viewBox="0 0 17 16" fill="none" stroke-linecap="round" stroke-linejoin="round"><path d="M1.500 8.500a6.600 6.600 0 0 1 12.700-1.800" stroke="#75beff" stroke-width="1.600"/><path d="M14.800 1.800v5.400H9.600" stroke="#75beff" stroke-width="1.600"/><circle cx="7.600" cy="13" r="2.500" fill="#75beff"/></svg>
<svg class="abs" style="left:227.5px;top:9.0px" width="13" height="17" viewBox="0 0 13 17" fill="none" stroke-linecap="round" stroke-linejoin="round"><path d="M6.500 1v9.400M2 6.400l4.500 4.400L11 6.400" stroke="#75beff" stroke-width="1.700"/><circle cx="6.500" cy="14.300" r="2.500" fill="#75beff"/></svg>
<svg class="abs" style="left:256.0px;top:9.0px" width="13" height="17" viewBox="0 0 13 17" fill="none" stroke-linecap="round" stroke-linejoin="round"><path d="M6.500 11V1.600M2 5.800 6.500 1.400 11 5.800" stroke="#75beff" stroke-width="1.700"/><circle cx="6.500" cy="14.300" r="2.500" fill="#75beff"/></svg>
<svg class="abs" style="left:284.0px;top:9.3px" width="16" height="16" viewBox="0 0 16 16" fill="none" stroke-linecap="round" stroke-linejoin="round"><path d="M3.400 4.400A6.300 6.300 0 1 1 1.700 8.800" stroke="#89d185" stroke-width="1.600"/><path d="M2.600 1v4.400H7" stroke="#89d185" stroke-width="1.600"/></svg>
<svg class="abs" style="left:313.5px;top:10.3px" width="14" height="14" viewBox="0 0 14 14" fill="none" stroke-linecap="round" stroke-linejoin="round"><rect x="1" y="1" width="12" height="12" rx=".8" stroke="#f48771" stroke-width="1.500"/></svg>
<div class="abs" style="left:336.5px;top:7px;width:122.500px;height:22px;background:#3c3c3c;border-radius:2px"></div>
<div class="abs" style="left:345.5px;top:7px;height:22px;line-height:24.500px;font-size:14.100px;color:#f0f0f0;white-space:pre">Launch Vice</div>
<svg class="abs" style="left:437.5px;top:14.0px" width="12" height="8" viewBox="0 0 12 8" fill="none" stroke-linecap="round" stroke-linejoin="round"><path d="M.8 1.200 6 6.400l5.200-5.200" stroke="#d0d0d0" stroke-width="1.300"/></svg></div>
<div id="edsep" class="abs"></div>
<div id="panel" class="abs"><div class="abs ptab" style="left:21.3px;top:10px;width:59.6px">PROBLEMS</div>
<div class="abs ptab" style="left:107.3px;top:10px;width:45.3px">OUTPUT</div>
<div class="abs ptab" style="left:179.8px;top:10px;width:95.2px">DEBUG CONSOLE</div>
<div class="abs ptab act" style="left:301.9px;top:10px;width:56.4px">TERMINAL</div>
<div class="abs ptab" style="left:385.0px;top:10px;width:45.9px">GITLENS</div>
<div class="abs" style="left:299px;top:33px;width:62px;height:1px;background:#e7e7e7"></div>
<div class="abs tl mono" style="left:21.3px;top:43.21px;color:#23c27f">build up-to-date</div>
<div class="abs" style="left:21.3px;top:59.20px;width:19.95px;height:13.200px;background:#d4d4d4"></div>
<div class="abs tl mono" style="left:27.95px;top:58.00px;color:#1e1e1e">*</div>
<div class="abs tl mono" style="left:47.90px;top:58.00px">Terminal will be reused by tasks, press any key to close it.</div>
<div class="abs" style="left:21.3px;top:88.78px;width:19.95px;height:13.200px;background:#d4d4d4"></div>
<div class="abs tl mono" style="left:27.95px;top:87.58px;color:#1e1e1e">*</div>
<div class="abs tl mono" style="left:47.90px;top:87.58px">Executing task: build example</div>
<div class="abs tl mono" style="left:21.3px;top:117.15px;color:#23c27f">build up-to-date</div>
<div class="abs" style="left:21.3px;top:133.15px;width:19.95px;height:13.200px;background:#d4d4d4"></div>
<div class="abs tl mono" style="left:27.95px;top:131.95px;color:#1e1e1e">*</div>
<div class="abs tl mono" style="left:47.90px;top:131.95px">Terminal will be reused by tasks, press any key to close it.</div>
<div class="abs" style="left:21.3px;top:162.73px;width:19.95px;height:13.200px;background:#d4d4d4"></div>
<div class="abs tl mono" style="left:27.95px;top:161.53px;color:#1e1e1e">*</div>
<div class="abs tl mono" style="left:47.90px;top:161.53px">Executing task: build example</div>
<div class="abs tl mono" style="left:21.3px;top:191.11px;color:#23c27f">build up-to-date</div>
<div class="abs" style="left:21.3px;top:207.09px;width:19.95px;height:13.200px;background:#d4d4d4"></div>
<div class="abs tl mono" style="left:27.95px;top:205.89px;color:#1e1e1e">*</div>
<div class="abs tl mono" style="left:47.90px;top:205.89px">Terminal will be reused by tasks, press any key to close it.</div>
<div class="abs" style="left:21.3px;top:222px;width:6.400px;height:13.500px;border:1px solid #c8c8c8"></div>
<div class="abs" style="left:904px;top:41px;width:1px;height:198px;background:#3a3a3a"></div>
<div class="abs" style="left:905px;top:62.3px;width:171px;height:23.400px;background:#37373d"></div>
<svg class="abs" style="left:1054px;top:65px" width="14" height="16" viewBox="0 0 14 16" fill="none" stroke="#b8b8b8" stroke-width="1.300"><path d="M-1 12 3 15.500 12.500 2"/></svg>
<svg class="abs" style="left:1055.5px;top:15px" width="8" height="8" viewBox="0 0 9 9" fill="none" stroke="#c5c5c5" stroke-width="1.200"><path d="M0 0l9 9M9 0 0 9"/></svg></div>
<div id="status" class="abs"><div class="remote abs"></div><svg class="abs" style="left:11.4px;top:5.7px" width="11.5" height="13" viewBox="0 0 11.5 13" fill="none" stroke="#fff" stroke-width="1.300" stroke-linecap="round" stroke-linejoin="round"><path d="M.8 4.600 4.800 8.600.8 12.600M10.700.6 6.700 4.600l4 4"/></svg>
<svg class="abs" style="left:45.5px;top:4.7px" width="12" height="15" viewBox="0 0 12 15" fill="none" stroke="#fff" stroke-width="1.300" stroke-linecap="round" stroke-linejoin="round"><circle cx="2.800" cy="2.700" r="1.900"/><circle cx="2.800" cy="12.300" r="1.900"/><circle cx="9.600" cy="4.600" r="1.900"/><path d="M2.800 4.600v5.800M9.600 6.500c0 2.800-3.600 2.600-6.200 4"/></svg>
<div class="abs st" style="left:63.800px">feature/alpha3*</div>
<svg class="abs" style="left:173.5px;top:5.7px" width="15.5" height="13" viewBox="0 0 15.5 13" fill="none" stroke="#fff" stroke-width="1.300" stroke-linecap="round" stroke-linejoin="round"><path d="M1.200 6.500a6.400 5.600 0 0 1 11.400-3.300M14.300 6.500a6.400 5.600 0 0 1-11.400 3.300"/><path d="M12.900.4v3h-3M2.600 12.600v-3h3"/></svg>
<svg class="abs" style="left:207.5px;top:4.7px" width="13" height="15" viewBox="0 0 13 15" fill="none" stroke="#fff" stroke-width="1.300" stroke-linecap="round" stroke-linejoin="round"><circle cx="3" cy="2.700" r="1.900"/><circle cx="3" cy="12.300" r="1.900"/><circle cx="10" cy="7.500" r="1.900"/><path d="M3 4.600v5.800M6.600 1v13M8.300 6.400 6.800 4.500"/></svg>
<svg class="abs" style="left:240.5px;top:5.4px" width="13.5" height="13.5" viewBox="0 0 13.5 13.5" fill="none" stroke="#fff" stroke-width="1.300" stroke-linecap="round" stroke-linejoin="round"><circle cx="6.750" cy="6.750" r="6"/><path d="M4.300 4.300l4.900 4.900M9.200 4.300 4.300 9.200"/></svg>
<div class="abs st" style="left:258.600px">0</div>
<svg class="abs" style="left:271px;top:5.7px" width="13.6" height="13" viewBox="0 0 13.6 13" fill="none" stroke="#fff" stroke-width="1.300" stroke-linecap="round" stroke-linejoin="round"><path d="M6.800 1 12.900 12.200H.7z"/><path d="M6.800 5v3.800M6.800 10.400v.3"/></svg>
<div class="abs st" style="left:288.800px">0</div>
<svg class="abs" style="left:313px;top:4.7px" width="16" height="15" viewBox="0 0 16 15" fill="none" stroke="#fff" stroke-width="1.300" stroke-linecap="round" stroke-linejoin="round"><path d="M5 7V1l10 6-5 3"/><circle cx="5" cy="11" r="2.600"/><path d="M2.600 8.600 1.200 7.400M7.400 8.600l1.200-1.200M2.300 11H.6M7.700 11h1.700M2.600 13.400l-1.400 1.200M7.400 13.400l1.400 1.200"/></svg>
<div class="abs st" style="left:333.300px;transform:scaleX(.935);transform-origin:0 50%">Launch Vice (asm)</div>
<svg class="abs" style="left:1473px;top:5.2px" width="14.5" height="14" viewBox="0 0 14.5 14" fill="none" stroke="#fff" stroke-width="1.300" stroke-linecap="round" stroke-linejoin="round"><path d="M4.500 5.500V1h9.500v6.500h-2.500L9.500 9.500v-2"/><circle cx="4.600" cy="8" r="2"/><path d="M.8 13.600c.3-2.400 1.800-3.400 3.800-3.400s3.500 1 3.800 3.400z"/></svg>
<svg class="abs" style="left:1507.5px;top:5.2px" width="11.5" height="14" viewBox="0 0 11.5 14" fill="none" stroke="#fff" stroke-width="1.300" stroke-linecap="round" stroke-linejoin="round"><path d="M1 11h9.500c-1.200-1.200-1.300-2.400-1.300-5A3.450 3.450 0 0 0 2.300 6c0 2.600-.1 3.800-1.300 5z"/><path d="M4.600 12.800a1.200 1.200 0 0 0 2.300 0"/></svg></div>
<div id="vice" class="abs"><div class="abs" style="left:0.0px;top:0.0px;width:349.0px;height:32.0px;background:#f3f3f3"></div>
<div class="abs" style="left:297.0px;top:0.0px;width:52.0px;height:32.0px;background:#c42b1c"></div>
<svg class="abs" style="left:317px;top:10.3px" width="11" height="11" viewBox="0 0 11 11" stroke="#fff" stroke-width="1.100"><path d="M.4.4l10.200 10.200M10.600.4.4 10.600"/></svg>
<div class="abs" style="left:8.5px;top:7.0px;width:17.0px;height:16.6px;background:#2a2a2a;border-radius:3.500px"><span style="position:absolute;left:0;top:3.800px;width:17px;text-align:center;font:700 5.500px/8px 'Liberation Sans',sans-serif;color:#fff;letter-spacing:-.2px">C64</span></div>
<div class="abs" style="left:30.8px;top:5.6px;height:20px;line-height:20px;white-space:pre;font-size:13.400px;color:#1b1b1b;transform:scaleX(.905);transform-origin:0 50%">VICE (C64SC) (Keine Rück...</div>
<div class="abs" style="left:213.0px;top:15.2px;width:12.4px;height:1.0px;background:#1b1b1b"></div>
<div class="abs" style="left:265.0px;top:10.5px;width:10.6px;height:10.5px;border:1px solid #c9c9c9;border-radius:1px"></div>
<div class="abs" style="left:0.0px;top:32.0px;width:349.0px;height:24.5px;background:#faf8f6"></div>
<div class="abs" style="left:6.7px;top:36.4px;height:18px;line-height:18px;white-space:pre;font-size:12.600px;color:#a5a19e">File</div>
<div class="abs" style="left:37.0px;top:36.4px;height:18px;line-height:18px;white-space:pre;font-size:12.600px;color:#a5a19e">Edit</div>
<div class="abs" style="left:71.5px;top:36.4px;height:18px;line-height:18px;white-space:pre;font-size:12.600px;color:#a5a19e">Snapshot</div>
<div class="abs" style="left:139.0px;top:36.4px;height:18px;line-height:18px;white-space:pre;font-size:12.600px;color:#a5a19e">Preferences</div>
<div class="abs" style="left:217.6px;top:36.4px;height:18px;line-height:18px;white-space:pre;font-size:12.600px;color:#a5a19e">Help</div>
<div class="abs" style="left:0.0px;top:56.2px;width:349.0px;height:201.3px;background:#808080"></div>
<div class="abs" style="left:41.4px;top:56.2px;width:266.1px;height:201.3px;background:#5f47ea"></div>
<div class="abs" style="left:63.3px;top:82.7px;width:221.9px;height:148.1px;background:#000"></div>
<div class="abs mono" style="left:135.9px;top:93.2px;height:10px;line-height:10px;font-size:7.400px;font-weight:700;letter-spacing:1px;color:#fff;white-space:pre">HELLO, WORLD!</div>
<div class="abs" style="left:152.5px;top:139.1px;width:15.4px;height:15.4px;border-radius:50%;background:conic-gradient(from -8deg,#a9a9a9 0 25%,#c66a4e 0 50%,#a9a9a9 0 75%,#c66a4e 0)"></div>
<div class="abs" style="left:188.0px;top:131.0px;width:15.4px;height:15.4px;border-radius:50%;background:conic-gradient(from -8deg,#a9a9a9 0 25%,#8e7a00 0 50%,#a9a9a9 0 75%,#8e7a00 0)"></div>
<div class="abs" style="left:161.7px;top:150.9px;width:15.4px;height:15.4px;border-radius:50%;background:conic-gradient(from -8deg,#a9a9a9 0 25%,#d670d6 0 50%,#a9a9a9 0 75%,#d670d6 0)"></div>
<div class="abs" style="left:217.8px;top:162.0px;width:15.4px;height:15.4px;border-radius:50%;background:conic-gradient(from -8deg,#a9a9a9 0 25%,#c66a4e 0 50%,#a9a9a9 0 75%,#c66a4e 0)"></div>
<div class="abs" style="left:140.1px;top:180.7px;width:15.4px;height:15.4px;border-radius:50%;background:conic-gradient(from -8deg,#a4a4a4 0 25%,#7e7e7e 0 50%,#a4a4a4 0 75%,#7e7e7e 0)"></div>
<div class="abs" style="left:93.6px;top:196.8px;width:15.4px;height:15.4px;border-radius:50%;background:conic-gradient(from -8deg,#a9a9a9 0 25%,#c66a4e 0 50%,#a9a9a9 0 75%,#c66a4e 0)"></div>
<div class="abs" style="left:127.9px;top:208.7px;width:15.4px;height:15.4px;border-radius:50%;background:conic-gradient(from -8deg,#a9a9a9 0 25%,#5f47ea 0 50%,#a9a9a9 0 75%,#5f47ea 0)"></div>
<div class="abs" style="left:230.4px;top:208.7px;width:15.4px;height:15.4px;border-radius:50%;background:conic-gradient(from -8deg,#a9a9a9 0 25%,#c66a4e 0 50%,#a9a9a9 0 75%,#c66a4e 0)"></div>
<div class="abs" style="left:0.0px;top:257.5px;width:349.0px;height:80.0px;background:#f5f4f2"></div>
<div class="abs" style="left:6.0px;top:259.6px;height:16px;line-height:16px;white-space:pre;font-size:11.800px;color:#a3a3a3">warp:</div>
<div class="abs" style="left:41.4px;top:264.3px;width:10.0px;height:4.6px;background:#000;border-radius:1px"></div>
<div class="abs" style="left:62.6px;top:259.6px;height:16px;line-height:16px;white-space:pre;font-size:11.800px;color:#a3a3a3">pause:</div>
<div class="abs" style="left:101.5px;top:264.3px;width:10.5px;height:4.6px;background:#000;border-radius:1px"></div>
<div class="abs" style="left:123.5px;top:259.6px;height:16px;line-height:16px;white-space:pre;font-size:11.800px;color:#a3a3a3">shift-lock:</div>
<div class="abs" style="left:178.7px;top:264.3px;width:10.3px;height:4.6px;background:#000;border-radius:1px"></div>
<div class="abs" style="left:36.0px;top:282.8px;height:14px;line-height:14px;white-space:pre;font-family:'Liberation Mono',monospace;font-size:12.200px;color:#9c9c9c">100% cpu</div>
<div class="abs" style="left:36.0px;top:296.2px;height:14px;line-height:14px;white-space:pre;font-family:'Liberation Mono',monospace;font-size:12.200px;color:#9c9c9c">50.1 fps</div>
<div class="abs" style="left:100.5px;top:275.0px;width:1.0px;height:42.0px;background:#dedede"></div>
<div class="abs" style="left:166.3px;top:275.0px;width:1.0px;height:42.0px;background:#dedede"></div>
<div class="abs" style="left:268.2px;top:275.0px;width:1.0px;height:42.0px;background:#dedede"></div>
<div class="abs" style="left:175.8px;top:318.0px;width:1.0px;height:19.0px;background:#e2e2e2"></div>
<div class="abs" style="left:110.4px;top:280.0px;width:11.6px;height:12.2px;border:1px solid #c4c4c4;border-radius:2px;background:#fff"></div>
<div class="abs" style="left:110.4px;top:301.3px;width:11.6px;height:12.2px;border:1px solid #c4c4c4;border-radius:2px;background:#fff"></div>
<div class="abs" style="left:125.6px;top:279.0px;height:16px;line-height:16px;white-space:pre;font-size:12.900px;color:#a0a0a0;transform:scaleX(.9);transform-origin:0 50%">CRT</div>
<div class="abs" style="left:125.6px;top:299.8px;height:16px;line-height:16px;white-space:pre;font-size:12.900px;color:#a0a0a0">Mixer</div>
<div class="abs" style="left:173.0px;top:277.5px;height:16px;line-height:16px;white-space:pre;font-size:12.900px;color:#a0a0a0">Tape: 000</div>
<div class="abs" style="left:232.5px;top:278.8px;width:11.5px;height:11.6px;background:#000;border:1.500px solid #5c5c5c"></div>
<div class="abs" style="left:173.0px;top:296.2px;height:16px;line-height:16px;white-space:pre;font-size:12.900px;color:#a0a0a0">Joysticks:</div>
<svg class="abs" style="left:233.0px;top:296.7px" width="13" height="13" viewBox="0 0 13 13" fill="#111"><rect x="4.500" y="0" width="4" height="13"/><rect x="0" y="4.500" width="13" height="4"/><rect x="3.300" y="3.300" width="6.400" height="6.400"/></svg>
<svg class="abs" style="left:247.8px;top:296.7px" width="13" height="13" viewBox="0 0 13 13" fill="#111"><rect x="4.500" y="0" width="4" height="13"/><rect x="0" y="4.500" width="13" height="4"/><rect x="3.300" y="3.300" width="6.400" height="6.400"/></svg>
<div class="abs" style="left:283.8px;top:273.6px;height:16px;line-height:16px;white-space:pre;font-family:'Liberation Mono',monospace;font-size:13.300px;color:#ababab">8:0 18.5</div></div>
</body>
</html>
